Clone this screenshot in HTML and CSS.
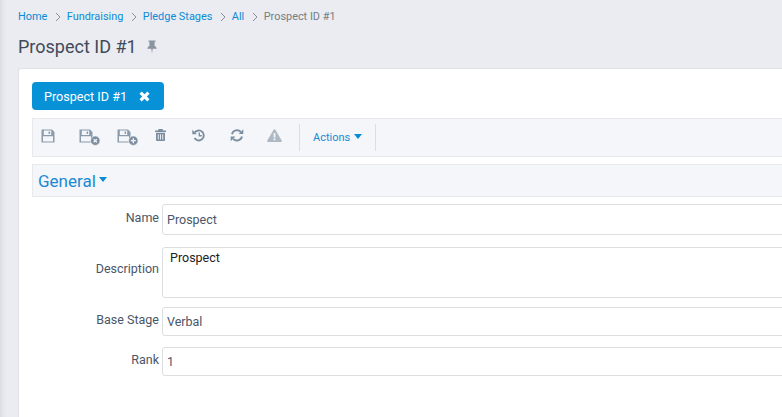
FILE: index.html
```
<!DOCTYPE html>
<html lang="en">
<head>
<meta charset="utf-8">
<title>Prospect ID #1</title>
<link rel="stylesheet" href="styles.css">
</head>
<body>
<div class="page">
  <nav class="crumbs">
    <a>Home</a><svg class="chev" viewBox="0 0 8 10"><path d="M2 1l4 4-4 4"/></svg>
    <a>Fundraising</a><svg class="chev" viewBox="0 0 8 10"><path d="M2 1l4 4-4 4"/></svg>
    <a>Pledge Stages</a><svg class="chev" viewBox="0 0 8 10"><path d="M2 1l4 4-4 4"/></svg>
    <a>All</a><svg class="chev" viewBox="0 0 8 10"><path d="M2 1l4 4-4 4"/></svg>
    <span>Prospect ID #1</span>
  </nav>
  <div class="title-row">
    <h1>Prospect ID #1</h1>
    <svg class="pin" viewBox="0 0 12 14"><path d="M2.500 0.500h7v1.200H8.600v4.200c1.300.5 2 1.500 2.100 2.900H6.700L6 13.500 5.300 8.800H1.300c.1-1.400.8-2.400 2.100-2.900V1.700H2.500z"/></svg>
  </div>
  <section class="card">
    <div class="tab"><span>Prospect ID #1</span>
      <svg class="tab-x" viewBox="0 0 12 12"><path d="M3 .5l3 3 3-3L11.500 3l-3 3 3 3L9 11.500l-3-3-3 3L.5 9l3-3-3-3z"/></svg>
    </div>
    <div class="toolbar">
      <div class="tools">
        <svg class="ico s1" viewBox="0 0 14 14"><path class="disc" fill-rule="evenodd" d="M.5.5h10.500L13.500 3v10.500H.5zM2.800 1.600v4.400h7.400V1.600zM7.600 2.400h1.500v2.700H7.600zM2 7.300v5.100h10V7.300z"/></svg>
        <svg class="ico s2" viewBox="0 0 21 17"><path class="disc" fill-rule="evenodd" d="M.5.5h10.500L13.500 3v10.500H.5zM2.800 1.600v4.400h7.400V1.600zM7.600 2.400h1.500v2.700H7.600zM2 7.300v5.100h10V7.300z"/><circle class="f halo" cx="16.300" cy="11.700" r="4.700"/><path class="w" d="M14.700 10.100l3.200 3.200M17.900 10.100l-3.200 3.200"/></svg>
        <svg class="ico s3" viewBox="0 0 21 17"><path class="disc" fill-rule="evenodd" d="M.5.5h10.500L13.500 3v10.500H.5zM2.800 1.600v4.400h7.400V1.600zM7.600 2.400h1.500v2.700H7.600zM2 7.300v5.100h10V7.300z"/><circle class="f halo" cx="16.300" cy="11.700" r="4.700"/><path class="w" d="M13.800 11.700h5M16.300 9.200v5"/></svg>
        <svg class="ico s4" viewBox="0 0 11 12"><path class="f" d="M3.500 0h4l.7 1.500H11V3H0V1.500h2.800zM1 3.800h9V11a1 1 0 0 1-1 1H2a1 1 0 0 1-1-1z"/><path class="bars" d="M3.300 5.300v5.200M5.500 5.300v5.200M7.700 5.300v5.200"/></svg>
        <svg class="ico s5" viewBox="0 0 14 13"><path class="t" d="M2.800 3.400A5 5 0 1 1 2.500 9"/><path class="f" d="M.3.800 4.800 5.300H.3z"/><path class="hands" d="M7.300 3.400v3.300h2.500"/></svg>
        <svg class="ico s6" viewBox="0 0 14 13"><path class="t" d="M2 5.200A5.200 5.200 0 0 1 10.800 2.800M12 7.500A5.200 5.200 0 0 1 3.200 9.900"/><path class="f" d="M13.300.3v4.700H8.600zM.7 12.300V7.600h4.700z"/></svg>
        <svg class="ico s7" viewBox="0 0 15 13"><path class="g" d="M7.500.3c.4 0 .8.2 1 .6l6.200 10.700c.4.700 0 1.400-.8 1.400H1.100c-.8 0-1.200-.7-.8-1.400L6.500.9c.2-.4.6-.6 1-.6z"/><path class="w2" d="M7.500 4v4.500M7.500 9.600v1.700"/></svg>
      </div>
      <div class="actions"><span>Actions</span><i class="caret"></i></div>
    </div>
    <div class="group"><span>General</span><i class="caret big"></i></div>
    <form class="form">
      <label class="lbl l-name">Name</label><div class="input h-name">Prospect</div>
      <label class="lbl l-desc">Description</label><div class="input area">Prospect</div>
      <label class="lbl l-base">Base Stage</label><div class="input h-base">Verbal</div>
      <label class="lbl l-rank">Rank</label><div class="input h-base">1</div>
    </form>
  </section>
</div>
</body>
</html>
```
FILE: styles.css
```
* { box-sizing: border-box; }
html, body { margin: 0; height: 100%; overflow: hidden; }
body {
  background: linear-gradient(to right, #d9dde1 0, #e3e6ea 3px, #eaecf1 7px);
  font-family: Roboto, "Liberation Sans", sans-serif;
  color: #4a5668;
}
.page { width: 1000px; height: 417px; overflow: hidden; padding: 0 0 0 18px; }
.crumbs {
  display: flex; align-items: center; height: 14px; margin-top: 10px;
  font-size: 10.900px; line-height: 14px; color: #0a8bd6;
}
.crumbs span { color: #777c82; }
.chev { width: 8px; height: 10px; margin: 0 5px 0 6.500px; fill: none; stroke: #8c9196; stroke-width: 1; }
.title-row { display: flex; align-items: center; height: 26px; margin-top: 10px; }
h1 { margin: 0; font-size: 18px; font-weight: 400; color: #414a59; line-height: 26px; }
.pin { width: 12px; height: 14px; margin-left: 9px; fill: #8a93a0; }
.card {
  margin-top: 8px; height: 400px; background: #fff;
  border: 1px solid #dfe1e4; border-right: 0; border-radius: 3px 0 0 0;
  padding: 13px 0 0 13px;
}
.tab {
  display: flex; align-items: center; width: 132px; height: 28px; padding-left: 12px;
  background: #0792d8; border-radius: 4px; color: #fff; font-size: 12.600px;
}
.tab-x { width: 11px; height: 11px; margin-left: 12px; fill: #fff; }
.toolbar {
  display: flex; align-items: stretch; height: 39px; margin-top: 8px;
  background: #f4f6fa; border: 1px solid #e8e9eb; border-right: 0;
  padding: 5px 0;
}
.tools { display: flex; width: 267px; align-items: flex-start; border-right: 1px solid #dcdfe2; }
.ico { display: block; flex: none; margin-top: 5px; }
.disc { fill: #8a9bad; }
.halo { stroke: #f4f6fa; stroke-width: .6; }
.f { fill: #7c8e9f; }
.w { fill: none; stroke: #f4f6fa; stroke-width: 1.300; }
.t { fill: none; stroke: #7c8e9f; stroke-width: 1.900; }
.hands { fill: none; stroke: #7c8e9f; stroke-width: 1.400; }
.bars { fill: none; stroke: #f4f6fa; stroke-width: .9; }
.g { fill: #aeb9c4; }
.w2 { fill: none; stroke: #f4f6fa; stroke-width: 1.800; }
.s1 { width: 14px; height: 14px; margin-left: 8px; }
.s2 { width: 21px; height: 17px; margin-left: 24px; }
.s3 { width: 21px; height: 17px; margin-left: 17px; }
.s4 { width: 11px; height: 12px; margin-left: 17px; }
.s5 { width: 14px; height: 13px; margin-left: 26px; }
.s6 { width: 14px; height: 13px; margin-left: 24px; }
.s7 { width: 15px; height: 13px; margin-left: 23px; }
.actions {
  display: flex; align-items: center; width: 76px; padding-left: 13px;
  border-right: 1px solid #dcdfe2; font-size: 11px; color: #1a8ad4;
}
.caret {
  width: 0; height: 0; margin-left: 4px; margin-top: -2px;
  border-left: 4px solid transparent; border-right: 4px solid transparent; border-top: 5px solid #0a8bd6;
}
.group {
  display: flex; align-items: center; height: 33px; margin-top: 7px; padding-left: 5px;
  background: #f4f6fa; border: 1px solid #e8e9eb; border-right: 0;
  font-size: 17px; color: #1a8ad4;
}
.caret.big { margin-left: 3px; }
.form {
  display: grid; grid-template-columns: 127px 1fr; column-gap: 3px;
  margin-top: 7px; font-size: 12.500px;
}
.lbl { text-align: right; color: #4a5668; line-height: 15px; }
.l-name { padding-top: 6px; }
.l-desc { padding-top: 14px; }
.l-base { padding-top: 5px; }
.l-rank { padding-top: 5px; }
.input {
  border: 1px solid #dcdee1; border-radius: 3px; padding-left: 4px; color: #4a5668;
  display: flex; align-items: center; margin-bottom: 11px; background: #fff;
}
.h-name { height: 31px; margin-bottom: 12px; }
.area { height: 51px; align-items: flex-start; padding: 2px 0 0 7px; color: #222; margin-bottom: 9px; }
.h-base { height: 29px; }
```
